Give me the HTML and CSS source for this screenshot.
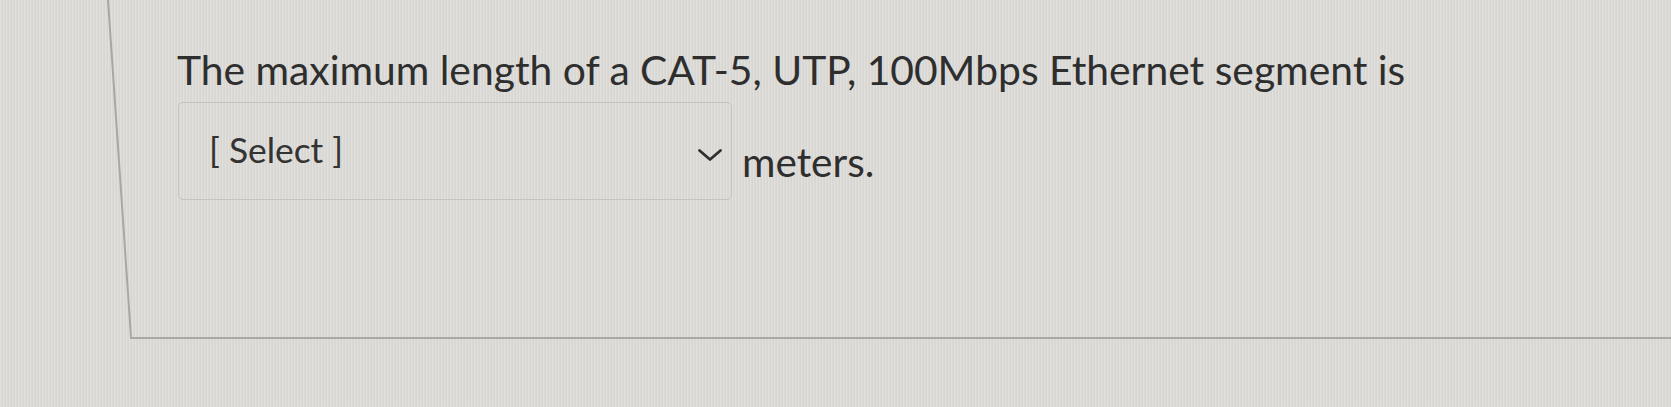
FILE: index.html
```html
<!DOCTYPE html>
<html lang="en">
<head>
<meta charset="utf-8">
<title>Question</title>
<link rel="stylesheet" href="styles.css">
</head>
<body>
<div class="page">
  <div class="panel">
    <p class="question">The maximum length of a CAT-5, UTP, 100Mbps Ethernet segment is</p>
    <div class="answer-row">
      <div class="select">
        <span class="select-text">[ Select ]</span>
        <svg class="chevron" width="26" height="14" viewBox="0 0 26 14">
          <path d="M2.5 2.5 L13 11.5 L23.5 2.5" fill="none" stroke="#2f2f2f" stroke-width="2.8" stroke-linecap="round" stroke-linejoin="round"/>
        </svg>
      </div>
      <span class="suffix">meters.</span>
    </div>
  </div>
</div>
</body>
</html>
```

FILE: styles.css
```css
html, body {
  margin: 0;
  padding: 0;
}
body {
  width: 1671px;
  height: 407px;
  overflow: hidden;
  background-color: #dad9d5;
  background-image: repeating-linear-gradient(90deg, rgba(255,255,255,0.18) 0px, rgba(255,255,255,0.18) 1px, rgba(0,0,0,0.03) 2px, rgba(0,0,0,0) 3px);
  font-family: Lato, "Open Sans", sans-serif;
  color: #2e2e2e;
}
.page {
  height: 407px;
}
.panel {
  position: relative;
  margin-left: 107px;
  height: 339px;
  padding: 46px 0 0 70px;
  box-sizing: border-box;
}
.panel::before {
  content: "";
  position: absolute;
  left: 0;
  top: 0;
  width: 2px;
  height: 339px;
  background: #a7a7a4;
  transform-origin: top left;
  transform: skewX(3.9deg);
}
.panel::after {
  content: "";
  position: absolute;
  left: 23px;
  right: 0;
  bottom: 0;
  height: 2px;
  background: #a9a9a6;
}
.question {
  margin: 0;
  font-size: 40.8px;
  line-height: 48px;
  white-space: nowrap;
}
.answer-row {
  display: flex;
  align-items: flex-end;
  margin-top: 8px;
}
.select {
  position: relative;
  width: 554px;
  height: 98px;
  box-sizing: border-box;
  border: 1.5px solid #c3c3c0;
  border-radius: 5px;
  padding: 23px 0 0 30px;
  margin-left: 1px;
}
.select-text {
  display: block;
  font-size: 35.4px;
  line-height: 48px;
  color: #333333;
}
.chevron {
  position: absolute;
  left: 518px;
  top: 45px;
}
.suffix {
  font-size: 40.6px;
  line-height: 48px;
  margin-left: 10px;
  padding-bottom: 14px;
}
```
